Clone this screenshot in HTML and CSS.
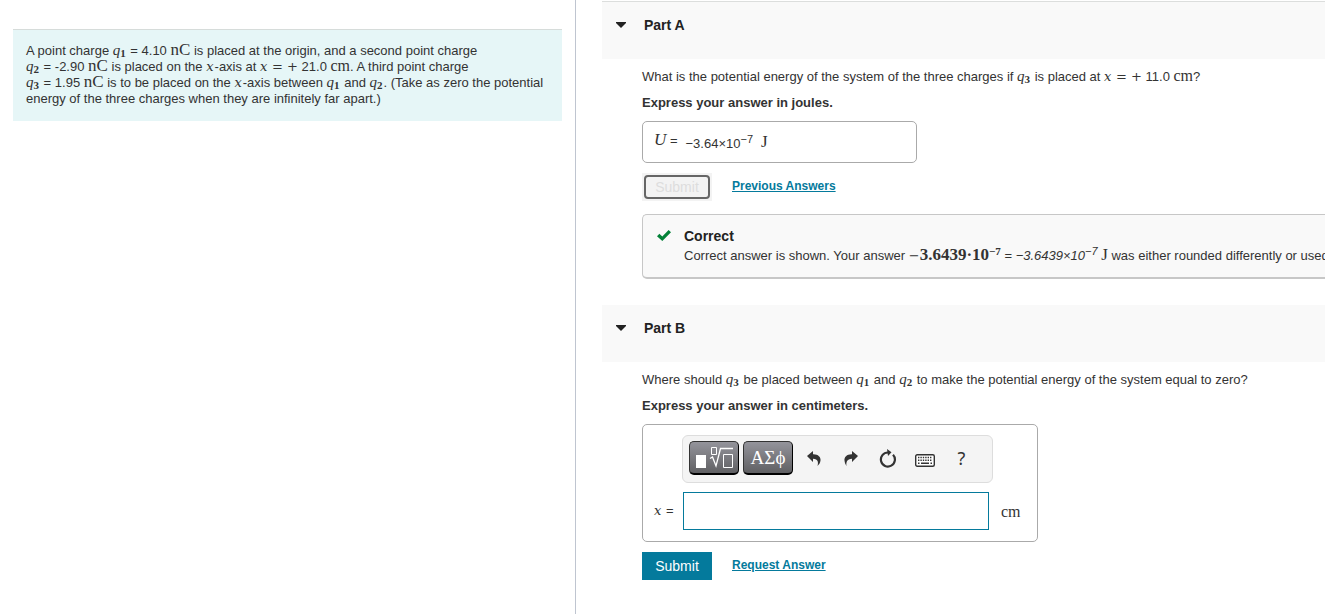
FILE: index.html
```html
<!doctype html>
<html lang="en">
<head>
<meta charset="utf-8">
<title>Potential energy of three charges</title>
<meta name="viewport" content="width=device-width,initial-scale=1">
<link rel="stylesheet" href="styles.css">
</head>
<body>

<!-- ---------- problem statement ---------- -->
<aside class="intro">
  <div class="statement">
    A point charge <i class="var">q<sub>1</sub></i> = 4.10 <span class="unit-lg">nC</span> is placed at the origin, and a second point charge<br>
    <i class="var">q<sub>2</sub></i> = -2.90 <span class="unit-lg">nC</span> is placed on the <i class="var x">x</i>-axis at <i class="var x">x</i> <span class="op">= +</span> 21.0 <span class="unit">cm</span>. A third point charge<br>
    <i class="var">q<sub>3</sub></i> = 1.95 <span class="unit-lg">nC</span> is to be placed on the <i class="var x">x</i>-axis between <i class="var">q<sub>1</sub></i> and <i class="var">q<sub>2</sub></i>. (Take as zero the potential<br>
    energy of the three charges when they are infinitely far apart.)
  </div>
</aside>

<main class="parts">

  <!-- ---------- part A ---------- -->
  <section class="part">
    <header class="part-head first">
      <svg class="caret" viewBox="0 0 10 6"><path d="M0 0h10v1L5 6 0 1z"/></svg>
      <h2>Part A</h2>
    </header>
    <div class="part-body">
      <p>What is the potential energy of the system of the three charges if <i class="var">q<sub>3</sub></i> is placed at <i class="var x">x</i> <span class="op">= +</span> 11.0 <span class="unit">cm</span>?</p>
      <p class="instruction">Express your answer in joules.</p>
      <div class="answer-given">
        <span><i class="var-lg">U</i> =</span>
        <span class="value">−3.64×10<sup>−7</sup></span>
        <span class="unit-lg">J</span>
      </div>
      <div class="actions">
        <button class="submit done" disabled><span>Submit</span></button>
        <a href="#">Previous Answers</a>
      </div>
      <div class="feedback">
        <svg class="check" viewBox="0 0 14 11"><path d="M0 6.2 2.4 3.7 5.3 6.4 11.6 0 14 2.3 5.3 11z"/></svg>
        <div>
          <h3>Correct</h3>
          <p>Correct answer is shown. Your answer <span class="op">−</span><b class="num">3.6439·10</b><sup class="num-sup">−7</sup> = <i>−3.6439×10<sup>−7</sup></i> <span class="unit-lg">J</span> was either rounded differently or used</p>
        </div>
      </div>
    </div>
  </section>

  <!-- ---------- part B ---------- -->
  <section class="part">
    <header class="part-head">
      <svg class="caret" viewBox="0 0 10 6"><path d="M0 0h10v1L5 6 0 1z"/></svg>
      <h2>Part B</h2>
    </header>
    <div class="part-body">
      <p>Where should <i class="var">q<sub>3</sub></i> be placed between <i class="var">q<sub>1</sub></i> and <i class="var">q<sub>2</sub></i> to make the potential energy of the system equal to zero?</p>
      <p class="instruction">Express your answer in centimeters.</p>
      <div class="answer-entry">
        <div class="toolbar">
          <button class="palette" aria-label="Templates">
            <svg width="38" height="24" viewBox="0 0 38 24" fill="none" stroke="#fff">
              <path d="M1 9h10v13H1z" fill="#fff" stroke="none"/>
              <path d="M16.5 1.500h5v7h-5z"/>
              <path d="M15 12.5l2.500-1.500 3.500 9 4.500-17.500h12.500" stroke-width="1.3"/>
              <path d="M28.500 8.500h9v13h-9z"/>
            </svg>
          </button>
          <button class="palette greek">ΑΣϕ</button>
          <button class="tool" aria-label="Undo"><svg width="14" height="15" viewBox="0 0 14 15"><path d="M0 5 6 0v3.200C11 3 14 6 13.500 9.500 13.200 12 12 13.500 10.500 15c1-3.500.8-7-4.500-7.200V11z"/></svg></button>
          <button class="tool" aria-label="Redo"><svg width="14" height="15" viewBox="0 0 14 15"><path d="M14 5 8 0v3.200C3 3 0 6 .5 9.500.800 12 1.500 13.500 2.500 15c-.5-3.500.2-7 5.500-7.200V11z"/></svg></button>
          <button class="tool" aria-label="Reset"><svg width="18" height="19" viewBox="0 0 18 19"><path d="M14 5.700a7 7 0 1 1-5-2.200" fill="none" stroke="#333" stroke-width="2.200"/><path d="M8 0 12.500 3.300 9 7z"/></svg></button>
          <button class="tool" aria-label="Keyboard"><svg class="keys" width="20" height="13" viewBox="0 0 20 13"><rect x=".7" y=".7" width="18.600" height="11.600" rx="1.500" fill="#fff" stroke="#333" stroke-width="1.400"/><path d="M3 3.500h14M3 6.200h14" stroke="#333" stroke-width="1.500" stroke-dasharray="1.400 1"/><path d="M3 9.300h1.500m1.500 0h8m1.500 0H17" stroke="#333" stroke-width="1.500"/></svg></button>
          <button class="tool help" aria-label="Help">?</button>
        </div>
        <label for="answer"><i class="var x">x</i> =</label>
        <input id="answer" type="text" autocomplete="off">
        <span class="unit">cm</span>
      </div>
      <div class="actions">
        <button class="submit">Submit</button>
        <a href="#">Request Answer</a>
      </div>
    </div>
  </section>
</main>

</body>
</html>
```
FILE: styles.css
```css
*{box-sizing:border-box;margin:0;padding:0}
html,body{height:100%}
body{
  display:flex;
  overflow:hidden;
  font:13px/16px "Liberation Sans",Arial,sans-serif;
  color:#333;
  background:#fff;
}

/* ---------- problem statement ---------- */
.intro{
  flex:0 0 576px;
  padding:29px 13px 0;
  border-right:1px solid #bfc5d0;
}
.statement{
  padding:13px 12px 14px 13px;
  border-top:1px solid #d6dcda;
  background:#e6f6f7;
  white-space:nowrap;
}

/* ---------- math ---------- */
.var,.var-lg,.unit,.unit-lg,.num,.num-sup{
  font-family:"Liberation Serif","Times New Roman",serif;
  line-height:1px;
}
.var{margin-right:1px;font-size:15px}
.var.x{font-family:"DejaVu Serif",serif;font-size:13px}
.var sub{
  font-size:11px;
  font-style:normal;
  font-weight:bold;
  line-height:1px;
  vertical-align:-2px;
}
.var-lg{font-size:17px}
.unit{font-size:16px}
.unit-lg{font-size:17px}
.op{font-family:"DejaVu Serif",serif;line-height:1px}
.num{font-size:17px}
sup{font-size:11px;line-height:1px;vertical-align:5px}
.num-sup{font-weight:bold}

/* ---------- parts ---------- */
.parts{
  flex:1;
  min-width:0;
  padding:1px 0 0 26px;
  overflow:hidden;
}
.part-head{
  display:flex;
  gap:18px;
  height:57px;
  padding:15px 14px;
  background:#f9f9f9;
}
.part-head.first{height:58px;border-top:1px solid #dcdedd}
.caret{width:10px;height:6px;margin-top:5px;fill:#222}
h2{font-size:14px;line-height:16px;color:#222}
.part-body{padding:10px 0 26px 40px;white-space:nowrap}
.part-body > p{margin-bottom:10px}
.instruction{font-weight:bold}

.answer-given{
  display:flex;
  align-items:center;
  gap:8px;
  width:275px;
  height:42px;
  padding:0 11px 2px;
  border:1px solid #aaa;
  border-radius:5px;
}
.value{padding-top:6px}

.actions{
  display:flex;
  gap:20px;
  margin-top:10px;
}
.submit{
  width:70px;
  height:28px;
  border:0;
  font:14px/16px "Liberation Sans",Arial,sans-serif;
  color:#fff;
  background:#047a9c;
}
.submit.done{padding:2px;color:#ddd;background:#f3f3f3}
.submit.done span{
  display:block;
  height:24px;
  border:2px solid #666;
  border-radius:4px;
  line-height:20px;
}
a{
  padding-top:5px;
  font-size:12px;
  font-weight:bold;
  color:#047a9c;
}

.feedback{
  display:flex;
  gap:13px;
  height:65px;
  margin-top:13px;
  padding:13px 14px;
  border:1px solid #c7c7c7;
  border-right:0;
  border-bottom-width:2px;
  border-radius:5px 0 0 5px;
  background:#f9f9f9;
}
.check{flex:none;width:14px;height:11px;margin-top:2px;fill:#038238}
h3{font-size:14px;line-height:16px;margin-bottom:4px;color:#222}

/* ---------- answer entry ---------- */
.answer-entry{
  display:grid;
  grid-template-columns:29px 306px auto;
  row-gap:9px;
  align-items:center;
  width:396px;
  padding:10px 11px 11px;
  border:1px solid #aaa;
  border-radius:5px;
}
.answer-entry .unit{padding-left:12px}
.toolbar{
  grid-column:2 / 4;
  display:flex;
  align-items:center;
  gap:4px;
  width:311px;
  height:48px;
  margin-left:-1px;
  padding:0 6px 2px;
  border:1px solid #ddd;
  border-radius:6px;
  background:#f4f4f4;
}
.palette{
  display:flex;
  align-items:center;
  justify-content:center;
  width:50px;
  height:34px;
  border:1px solid #333;
  border-right-color:#000;
  border-bottom:2px solid #000;
  border-radius:5px;
  color:#fff;
  background:linear-gradient(#94949b,#606063);
}
.greek{font:19px/20px "Liberation Serif","Times New Roman",serif}
.tool{
  display:flex;
  align-items:center;
  justify-content:center;
  width:33px;
  height:34px;
  border:0;
  background:none;
  fill:#333;
}
.keys{margin-top:4px}
.help{font:18px/20px "Noto Sans",sans-serif;color:#333}
#answer{
  width:306px;
  height:38px;
  padding:0 8px;
  border:1px solid #047a9c;
  font:inherit;
}
```
